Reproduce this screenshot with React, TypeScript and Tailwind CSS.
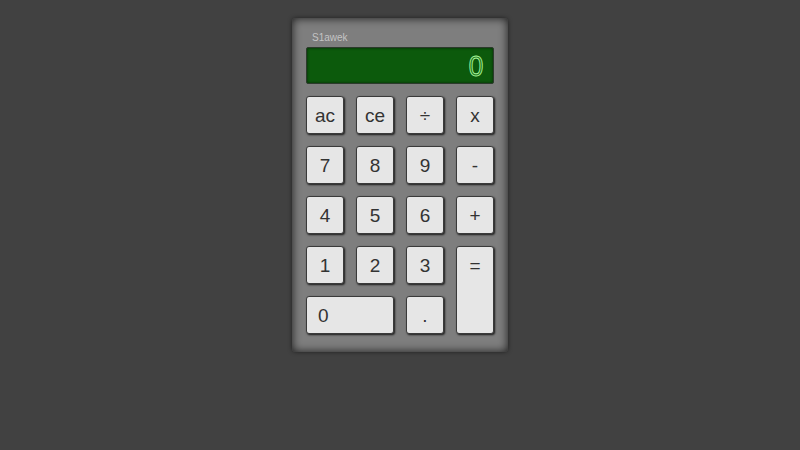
const keys: { label: string; cls?: string }[] = [
  { label: "ac" },
  { label: "ce" },
  { label: "÷" },
  { label: "x" },
  { label: "7" },
  { label: "8" },
  { label: "9" },
  { label: "-" },
  { label: "4" },
  { label: "5" },
  { label: "6" },
  { label: "+" },
  { label: "1" },
  { label: "2" },
  { label: "3" },
  { label: "=", cls: "row-span-2" },
  { label: "0", cls: "col-span-2 justify-start pl-[11px]" },
  { label: "." },
];

function Key({ label, cls }: { label: string; cls?: string }) {
  return (
    <button
      className={
        "flex items-start justify-center rounded-[3px] border border-[#3a3a3a] bg-[#e6e6e6] pt-[1px] text-[19px] leading-[36px] text-[#333] shadow-[1px_1px_2px_rgba(0,0,0,0.8)] " +
        (cls ?? "")
      }
    >
      {label}
    </button>
  );
}

export default function App() {
  return (
    <div className="min-h-[450px] w-full bg-[#414141] pt-[18px] font-['Liberation_Sans',Arial,sans-serif]">
      <div className="mx-auto w-[216px] rounded-[4px] bg-[#7e7e7e] px-[14px] pb-[18px] pt-[12px] shadow-[inset_0_0_10px_rgba(0,0,0,0.8),0_0_4px_rgba(0,0,0,0.5)]">
        <div className="h-[15px] pl-[6px] text-[10px] leading-[15px] text-[#c4c4c4]">
          S1awek
        </div>
        <div className="mt-[2px] flex h-[37px] items-center justify-end rounded-[2px] border border-[#2c3a2c] bg-[#0c5a0c] pr-[9px] shadow-[inset_0_0_3px_rgba(0,0,0,0.6)]">
          <span className="inline-block scale-x-[0.9] text-[29px] leading-[30px] text-[#1d6e1a] [-webkit-text-stroke:1px_#a8f59a]">
            0
          </span>
        </div>
        <div className="mt-[12px] grid grid-cols-[38px_38px_38px_38px] grid-rows-[38px_38px_38px_38px_38px] gap-[12px]">
          {keys.map((k) => (
            <Key key={k.label} label={k.label} cls={k.cls} />
          ))}
        </div>
      </div>
    </div>
  );
}
